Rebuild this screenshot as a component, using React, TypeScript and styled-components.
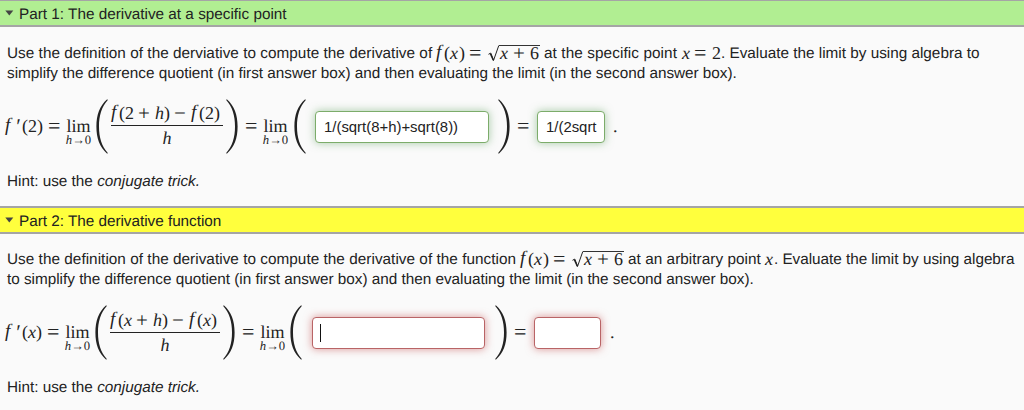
import React from 'react';
import styled, { createGlobalStyle } from 'styled-components';

const GlobalStyle = createGlobalStyle`
    body {
        margin: 0;
        background: #fafafa;
        overflow: hidden;
    }
`;

const Page = styled.main`
    width: 1024px;
    height: 410px;
    overflow: hidden;
    background: #fafafa;
    color: #222;
    font-family: 'Liberation Sans', Arial, sans-serif;
    font-size: 15.3px;
    line-height: 20px;
    text-rendering: geometricPrecision;
`;

const Header = styled.header<{ $color: string; $first?: boolean }>`
    display: flex;
    align-items: center;
    box-sizing: border-box;
    height: ${({ $first }) => ($first ? 27 : 28)}px;
    padding: ${({ $first }) => ($first ? 3 : 4)}px 0 0 5px;
    gap: 5px;
    background: ${({ $color }) => $color};
    border: solid #a5a5a5;
    border-width: ${({ $first }) => ($first ? 1 : 2)}px 0 2px;
`;

const Content = styled.section<{ $top: number }>`
    box-sizing: border-box;
    height: 179px;
    padding: ${({ $top }) => $top}px 0 0 7px;
`;

const Text = styled.span<{ $width?: number; $spacing?: number }>`
    flex: none;
    width: ${({ $width }) => ($width ? `${$width}px` : 'auto')};
    letter-spacing: ${({ $spacing = 0 }) => $spacing}px;
    white-space: pre;
`;

const Sym = styled.span<{ $width: number; $italic?: boolean; $size?: number }>`
    flex: none;
    width: ${({ $width }) => $width}px;
    font-family: 'Liberation Serif', 'Times New Roman', serif;
    font-size: ${({ $size = 18 }) => $size}px;
    font-style: ${({ $italic }) => ($italic ? 'italic' : 'normal')};
    white-space: pre;
`;

const Line = styled.div`
    display: flex;
    height: 20px;
    white-space: nowrap;

    > ${Sym} {
        line-height: 18px;
    }
`;

const Radicand = styled.span`
    display: flex;
    flex: none;
    box-sizing: border-box;
    width: 41px;
    height: 19px;
    margin: 1px 4px 0 0;
    padding-left: 1px;
    line-height: 15px;
    border-top: 1px solid #333;
`;

const Surd = styled.svg`
    flex: none;
    margin-top: 1px;
`;

const Equation = styled.div`
    display: flex;
    align-items: center;
    height: 55px;
    margin: 15px 0 18px -3px;

    > ${Sym} {
        padding-bottom: 1px;
    }
`;

const LimitBox = styled.div`
    display: flex;
    flex: none;
    flex-direction: column;
    align-items: center;
    width: 25px;
    padding-top: 10px;
    font-family: 'Liberation Serif', 'Times New Roman', serif;
    font-size: 18px;
    line-height: 17px;
`;

const Under = styled.span`
    font-size: 12.7px;
    line-height: 11px;
    white-space: nowrap;
`;

const FractionBox = styled.div<{ $width: number; $shift: number }>`
    display: flex;
    flex: none;
    flex-direction: column;
    align-items: center;
    width: ${({ $width }) => $width}px;
    margin: ${({ $shift }) => $shift}px 3px 0;
    font-family: 'Liberation Serif', 'Times New Roman', serif;
    font-size: 18px;
`;

const Numerator = styled.div`
    display: flex;
    width: 100%;
    height: 21px;
    line-height: 18px;
    border-bottom: 1px solid #222;
`;

const Denominator = styled.i`
    height: 23px;
    line-height: 24px;
`;

const Bracket = styled.svg`
    flex: none;
`;

const Gap = styled.span<{ $width: number }>`
    flex: none;
    width: ${({ $width }) => $width}px;
`;

const Answer = styled.input<{ $width: number; $valid?: boolean }>`
    flex: none;
    box-sizing: border-box;
    width: ${({ $width }) => $width}px;
    height: 32px;
    padding: 0 0 0 8px;
    color: #222;
    font-family: 'Liberation Sans', Arial, sans-serif;
    font-size: 14.9px;
    background: #fff;
    border: 1px solid ${({ $valid }) => ($valid ? '#7cac6a' : '#b96466')};
    border-radius: 4px;
    outline: 0;
    box-shadow: 0 0 8px ${({ $valid }) => ($valid ? 'rgba(81, 153, 81, .5)' : 'rgba(191, 64, 64, .55)')};
`;

const CaretField = styled.div`
    display: flex;
    flex: none;
    align-items: center;
    box-sizing: border-box;
    width: 173px;
    height: 32px;
    padding-left: 7px;
    background: #fff;
    border: 1px solid #b96466;
    border-radius: 4px;
    box-shadow: 0 0 8px rgba(191, 64, 64, .55);
`;

const Caret = styled.span`
    width: 1px;
    height: 18px;
    background: #111;
`;

const Triangle = () => (
    <svg width="9" height="10" viewBox="0 0 9 10">
        <path d="M0.3 0.5H8.3L4.3 5.5Z" fill="#444" />
    </svg>
);

const Paren = ({ right }: { right?: boolean }) => (
    <Bracket width="12" height="55" viewBox="0 0 12 55">
        <path
            d="M11.2 0.3C3.6 7 0.4 16 0.4 27.5S3.6 48 11.2 54.7L11.8 54C5.6 47 3 38.5 3 27.5S5.6 8 11.8 1Z"
            fill="#222"
            transform={right ? 'translate(12 0) scale(-1 1)' : undefined}
        />
    </Bracket>
);

const Root = () => (
    <>
        <Surd width="11" height="19" viewBox="0 0 11 19">
            <path d="M0.5 9.3L2.6 8.1L5.5 15.5L10.8 0.5" fill="none" stroke="#222" strokeWidth="1" />
            <path d="M2.5 8.6L5.4 15.3" fill="none" stroke="#222" strokeWidth="1.6" />
        </Surd>
        <Radicand>
            <Sym $width={13} $italic>x</Sym>
            <Sym $width={17} $size={21}>+</Sym>
            <Sym $width={10}>6</Sym>
        </Radicand>
    </>
);

const InlineFunction = () => (
    <>
        <Gap $width={1} />
        <Sym $width={8} $italic $size={19}>f</Sym>
        <Sym $width={6}>(</Sym>
        <Sym $width={9} $italic>x</Sym>
        <Sym $width={10}>)</Sym>
        <Sym $width={19} $size={22}>=</Sym>
        <Root />
    </>
);

const Limit = () => (
    <LimitBox>
        <span>lim</span>
        <Under><i>h</i>→0</Under>
    </LimitBox>
);

interface FractionProps {
    arg: string;
    width: number;
    shift: number;
}

const Fraction = ({ arg, width, shift }: FractionProps) => {
    const italic = arg === 'x';

    return (
        <FractionBox $width={width} $shift={shift}>
            <Numerator>
                <Sym $width={8} $italic $size={19}>f</Sym>
                <Sym $width={6}>(</Sym>
                <Sym $width={italic ? 12 : 13} $italic={italic}>{arg}</Sym>
                <Sym $width={17} $size={21}>+</Sym>
                <Sym $width={9} $italic>h</Sym>
                <Sym $width={10}>)</Sym>
                <Sym $width={17} $size={21}>−</Sym>
                <Sym $width={8} $italic $size={19}>f</Sym>
                <Sym $width={6}>(</Sym>
                <Sym $width={italic ? 8 : 9} $italic={italic}>{arg}</Sym>
                <Sym $width={6}>)</Sym>
            </Numerator>
            <Denominator>h</Denominator>
        </FractionBox>
    );
};

const Derivative = ({ arg }: { arg: string }) => (
    <>
        <Gap $width={1} />
        <Sym $width={10} $italic $size={19}>f</Sym>
        <Sym $width={7} $italic $size={21}>′</Sym>
        <Sym $width={6}>(</Sym>
        <Sym $width={arg === 'x' ? 8 : 9} $italic={arg === 'x'}>{arg}</Sym>
        <Sym $width={11}>)</Sym>
        <Sym $width={18} $size={22}>=</Sym>
    </>
);

const Hint = () => (
    <Line>
        <Text>Hint: use the <em>conjugate trick.</em></Text>
    </Line>
);

const App = () => (
    <Page>
        <GlobalStyle />
        <Header $color="#b1ee92" $first>
            <Triangle />
            <Text>Part 1: The derivative at a specific point</Text>
        </Header>
        <Content $top={17}>
            <Line>
                <Text $width={428} $spacing={0.04}>Use the definition of the derviative to compute the derivative of</Text>
                <InlineFunction />
                <Text $width={138} $spacing={0.1}>at the specific point</Text>
                <Sym $width={12} $italic>x</Sym>
                <Sym $width={18} $size={22}>=</Sym>
                <Sym $width={9}>2</Sym>
                <Text>. Evaluate the limit by using algebra to</Text>
            </Line>
            <Line>
                <Text $spacing={-0.01}>simplify the difference quotient (in first answer box) and then evaluating the limit (in the second answer box).</Text>
            </Line>
            <Equation>
                <Derivative arg="2" />
                <Limit />
                <Gap $width={5} />
                <Paren />
                <Fraction arg="2" width={112} shift={0} />
                <Paren right />
                <Gap $width={7} />
                <Sym $width={18} $size={22}>=</Sym>
                <Limit />
                <Gap $width={6} />
                <Paren />
                <Gap $width={9} />
                <Answer $width={174} $valid defaultValue="1/(sqrt(8+h)+sqrt(8))" />
                <Gap $width={9} />
                <Paren right />
                <Gap $width={7} />
                <Sym $width={20} $size={22}>=</Sym>
                <Answer $width={68} $valid defaultValue="1/(2sqrt" />
                <Gap $width={8} />
                <Sym $width={5}>.</Sym>
            </Equation>
            <Hint />
        </Content>
        <Header $color="#ffff3d">
            <Triangle />
            <Text $spacing={-0.02}>Part 2: The derivative function</Text>
        </Header>
        <Content $top={16}>
            <Line>
                <Text $width={512} $spacing={0.04}>Use the definition of the derivative to compute the derivative of the function</Text>
                <InlineFunction />
                <Text $width={137} $spacing={0.05}>at an arbitrary point</Text>
                <Sym $width={9} $italic>x</Sym>
                <Text $spacing={-0.03}>. Evaluate the limit by using algebra</Text>
            </Line>
            <Line>
                <Text $spacing={-0.01}>to simplify the difference quotient (in first answer box) and then evaluating the limit (in the second answer box).</Text>
            </Line>
            <Equation>
                <Derivative arg="x" />
                <Limit />
                <Gap $width={5} />
                <Paren />
                <Fraction arg="x" width={110} shift={2} />
                <Paren right />
                <Gap $width={7} />
                <Sym $width={18} $size={22}>=</Sym>
                <Limit />
                <Gap $width={5} />
                <Paren />
                <Gap $width={10} />
                <CaretField>
                    <Caret />
                </CaretField>
                <Gap $width={10} />
                <Paren right />
                <Gap $width={7} />
                <Sym $width={20} $size={22}>=</Sym>
                <Answer $width={67} />
                <Gap $width={9} />
                <Sym $width={5}>.</Sym>
            </Equation>
            <Hint />
        </Content>
    </Page>
);

export default App;
